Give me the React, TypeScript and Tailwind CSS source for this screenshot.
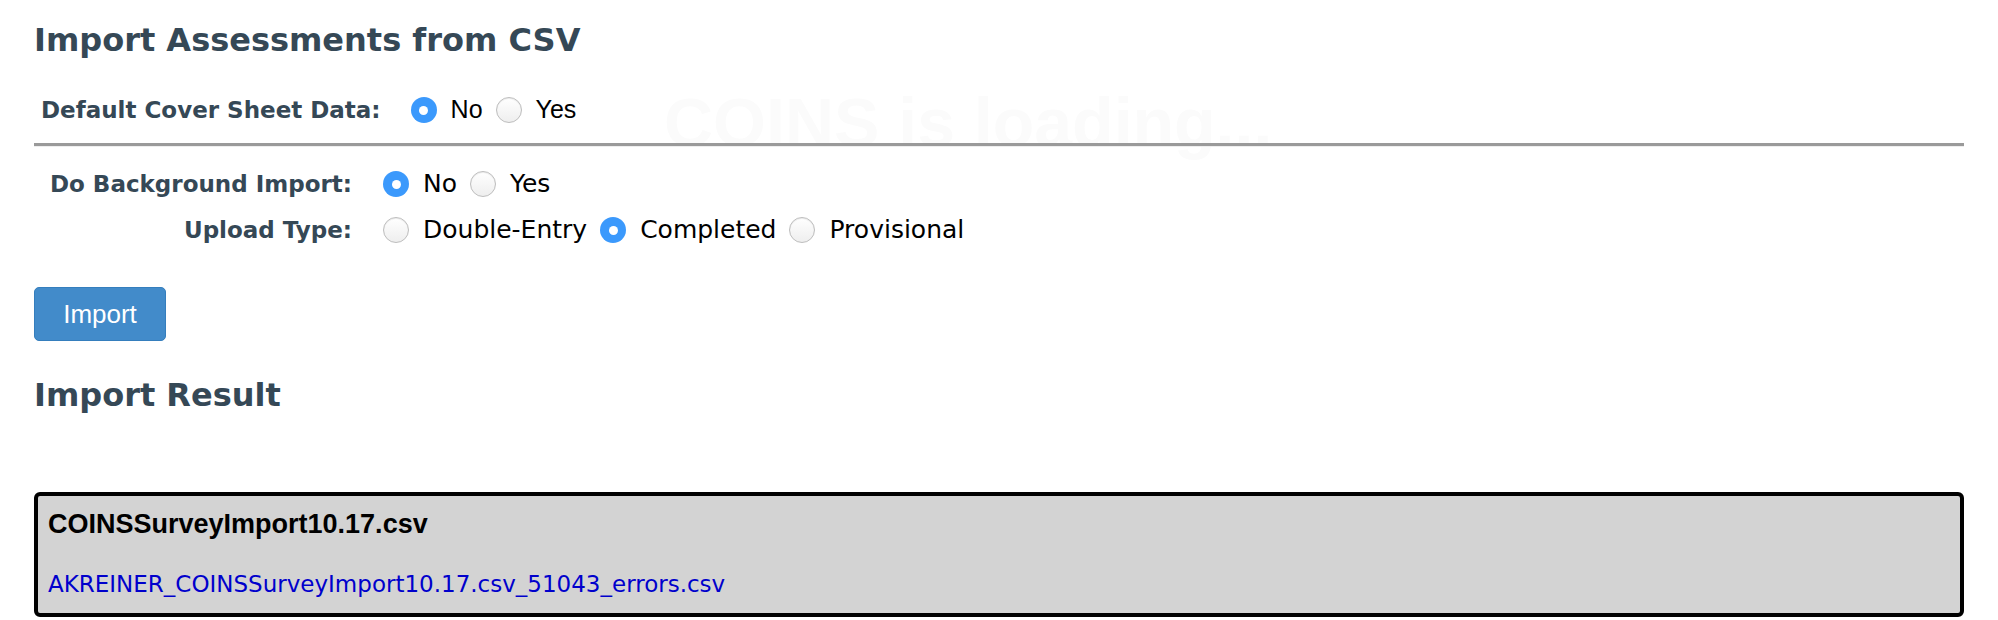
import { useState } from "react";

type Choice = { value: string; label: string };

function Radio({ checked, onClick }: { checked: boolean; onClick: () => void }) {
  return (
    <span
      onClick={onClick}
      className={`inline-flex h-[26px] w-[26px] shrink-0 cursor-pointer items-center justify-center rounded-full ${
        checked
          ? "bg-[#3b99fc]"
          : "border border-[#bdbdbd] bg-gradient-to-b from-[#ffffff] to-[#eeeeee] shadow-[inset_0_1px_1px_rgba(0,0,0,0.08)]"
      }`}
    >
      {checked && <span className="h-[9px] w-[9px] rounded-full bg-white" />}
    </span>
  );
}

function RadioGroup({
  choices,
  value,
  onChange,
  font,
}: {
  choices: Choice[];
  value: string;
  onChange: (v: string) => void;
  font: string;
}) {
  return (
    <div className={`flex items-center text-[25px] text-black ${font}`}>
      {choices.map((c, i) => (
        <label key={c.value} className={`flex cursor-pointer items-center ${i > 0 ? "ml-[13px]" : ""}`}>
          <Radio checked={value === c.value} onClick={() => onChange(c.value)} />
          <span className="ml-[14px]">{c.label}</span>
        </label>
      ))}
    </div>
  );
}

const yesNo: Choice[] = [
  { value: "no", label: "No" },
  { value: "yes", label: "Yes" },
];

const uploadTypes: Choice[] = [
  { value: "double", label: "Double-Entry" },
  { value: "completed", label: "Completed" },
  { value: "provisional", label: "Provisional" },
];

export default function App() {
  const [coverSheet, setCoverSheet] = useState("no");
  const [background, setBackground] = useState("no");
  const [uploadType, setUploadType] = useState("completed");

  return (
    <div className="relative min-h-[620px] overflow-hidden bg-white px-[34px] pt-[20px] font-['DejaVu_Sans',sans-serif]">
      {/* faint loading overlay left behind the form */}
      <div className="pointer-events-none absolute left-[664px] top-[88px] font-['Liberation_Sans',sans-serif] text-[68px] font-bold leading-none text-[#fbfbfb]">
        COINS is loading...
      </div>

      <div className="relative">
        <h1 className="text-[32px] font-bold leading-[40px] text-[#354856]">Import Assessments from CSV</h1>

        <div className="mt-[32px] flex h-[36px] items-center pl-[7px]">
          <span className="text-[23px] font-bold text-[#354856]">Default Cover Sheet Data:</span>
          <div className="ml-[30px]">
            <RadioGroup
              choices={yesNo}
              value={coverSheet}
              onChange={setCoverSheet}
              font="font-['Liberation_Sans',sans-serif]"
            />
          </div>
        </div>

        <div className="mt-[15px] border-t-[3px] border-b border-t-[#9a9a9a] border-b-[#eeeeee]" />

        <div className="mt-[14px] grid grid-cols-[318px_1fr] gap-x-[31px]">
          <span className="flex h-[46px] items-center justify-end text-[23px] font-bold text-[#354856]">
            Do Background Import:
          </span>
          <div className="flex h-[46px] items-center">
            <RadioGroup choices={yesNo} value={background} onChange={setBackground} font="" />
          </div>
          <span className="flex h-[46px] items-center justify-end text-[23px] font-bold text-[#354856]">
            Upload Type:
          </span>
          <div className="flex h-[46px] items-center">
            <RadioGroup choices={uploadTypes} value={uploadType} onChange={setUploadType} font="" />
          </div>
        </div>

        <button
          type="button"
          className="mt-[34px] h-[54px] w-[132px] rounded-[5px] border border-[#357ebd] bg-[#428bca] font-['Liberation_Sans',sans-serif] text-[26px] text-white"
        >
          Import
        </button>

        <h2 className="mt-[34px] text-[32px] font-bold leading-[40px] text-[#354856]">Import Result</h2>

        <div className="mt-[77px] h-[125px] rounded-[6px] border-4 border-black bg-[#d3d3d3] px-[10px]">
          <div className="mt-[10px] font-['Liberation_Sans',sans-serif] text-[27px] font-bold leading-[36px] text-black">
            COINSSurveyImport10.17.csv
          </div>
          <a href="#" className="mt-[24px] block text-[23px] leading-[36px] text-[#0000cc]">
            AKREINER_COINSSurveyImport10.17.csv_51043_errors.csv
          </a>
        </div>
      </div>
    </div>
  );
}
